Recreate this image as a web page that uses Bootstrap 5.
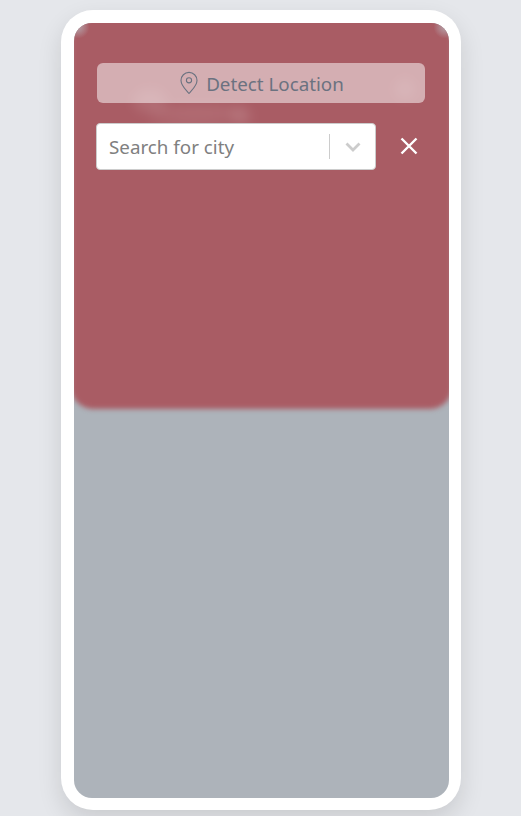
<!DOCTYPE html>
<html lang="en">
<head>
<meta charset="utf-8">
<title>Weather</title>
<link href="https://cdn.jsdelivr.net/npm/bootstrap@5.3.0/dist/css/bootstrap.min.css" rel="stylesheet">
<style>
html, body { height: 100%; }
body { background: #e5e7eb; font-family: "Noto Sans", sans-serif; overflow: hidden; }
.phone-frame { width: 400px; height: 800px; margin: 10px 0 0 61px; padding: 13px 12px 12px 13px; background: #fff; border-radius: 32px; box-shadow: 0 10px 25px rgba(0,0,0,.12); }
.phone-screen { height: 100%; background: #adb3ba; border-radius: 18px; overflow: hidden; position: relative; }
.hero-blur { height: 392px; margin: -6px -3px 0; padding-top: 6px; background: #a95c64; border-radius: 22px; filter: blur(2.5px); position: relative; }
.ghost-spot { position: absolute; background: rgba(255,255,255,.1); border-radius: 50%; filter: blur(6px); }
.ghost-a { left: 62px; top: 72px; width: 34px; height: 24px; }
.ghost-b { left: 78px; top: 88px; width: 100px; height: 16px; }
.ghost-c { left: 160px; top: 90px; width: 20px; height: 20px; }
.ghost-d { left: 324px; top: 62px; width: 20px; height: 20px; }
.ghost-e { left: 72px; top: 108px; width: 90px; height: 10px; }
.corner-glow { position: absolute; width: 24px; height: 24px; top: -8px; background: radial-gradient(circle at center, rgba(185,185,192,.75), rgba(185,185,192,0) 68%); }
.glow-l { left: -8px; } .glow-r { right: -8px; }
.search-layer { position: absolute; inset: 0; padding: 40px 23px 0 22px; }
.detect-btn { width: 328px; height: 40px; margin-left: 1px; background: rgba(255,255,255,.5); border: 0; border-radius: 6px; color: #6b7280; font-size: 18.8px; gap: 8px; padding: 0 0 0 2px; }
.detect-label { padding-top: 2px; }
.city-box { width: 280px; height: 47px; background: #fff; border: 1px solid #ccc; border-radius: 4px; }
.city-place { color: #808080; font-size: 18.8px; padding: 2px 0 0 12px; }
.box-sep { width: 1px; height: 25px; background: #ccc; }
.box-arrow { width: 45px; }
.close-x { margin: -1px 0 0 23px; background: none; border: 0; padding: 0; width: 20px; height: 20px; line-height: 0; }
</style>
</head>
<body>
<div class="phone-frame">
  <div class="phone-screen">
    <div class="hero-blur">
      <span class="ghost-spot ghost-a"></span>
      <span class="ghost-spot ghost-b"></span>
      <span class="ghost-spot ghost-c"></span>
      <span class="ghost-spot ghost-d"></span>
      <span class="ghost-spot ghost-e"></span>
    </div>
    <span class="corner-glow glow-l"></span>
    <span class="corner-glow glow-r"></span>
    <div class="search-layer">
      <button class="detect-btn d-flex align-items-center justify-content-center" type="button">
        <svg width="18" height="24" viewBox="0 0 18 24" fill="none" stroke="#6b7280" stroke-width="1.1" stroke-linejoin="round"><path d="M9 22.500C6 18.800 1 14.600 1 9.400a8 8 0 0 1 16 0c0 5.200-5 9.400-8 13.100z"/><circle cx="9" cy="9.300" r="2.600"/></svg>
        <span class="detect-label">Detect Location</span>
      </button>
      <div class="d-flex align-items-center mt-3 pt-1">
        <div class="city-box d-flex align-items-center">
          <span class="city-place flex-grow-1">Search for city</span>
          <span class="box-sep"></span>
          <span class="box-arrow d-flex justify-content-center">
            <svg width="16" height="10" viewBox="0 0 16 10" fill="none" stroke="#ccc" stroke-width="2.800"><path d="M1.500 1.500 8 8l6.500-6.500"/></svg>
          </span>
        </div>
        <button class="close-x" type="button" aria-label="Close">
          <svg width="20" height="20" viewBox="0 0 20 20" fill="none" stroke="#fff" stroke-width="2.400"><path d="M2.500 2.500l15 15M17.500 2.500l-15 15"/></svg>
        </button>
      </div>
    </div>
  </div>
</div>
<script src="https://cdn.jsdelivr.net/npm/bootstrap@5.3.0/dist/js/bootstrap.bundle.min.js"></script>
</body>
</html>
